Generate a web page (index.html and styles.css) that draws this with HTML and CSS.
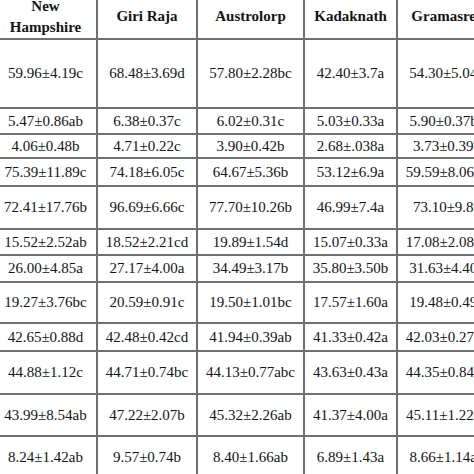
FILE: index.html
```
<!DOCTYPE html>
<html>
<head>
<meta charset="utf-8">
<link rel="stylesheet" href="styles.css">
</head>
<body>
<div class="frame">
<table class="data">
<colgroup>
<col class="c1"><col class="c2"><col class="c3"><col class="c4"><col class="c5">
</colgroup>
<thead>
<tr><th>New<br>Hampshire</th><th>Giri Raja</th><th>Austrolorp</th><th>Kadaknath</th><th>Gramasree</th></tr>
</thead>
<tbody>
<tr><td>59.96±4.19c</td><td>68.48±3.69d</td><td>57.80±2.28bc</td><td>42.40±3.7a</td><td>54.30±5.04b</td></tr>
<tr><td>5.47±0.86ab</td><td>6.38±0.37c</td><td>6.02±0.31c</td><td>5.03±0.33a</td><td>5.90±0.37bc</td></tr>
<tr><td>4.06±0.48b</td><td>4.71±0.22c</td><td>3.90±0.42b</td><td>2.68±.038a</td><td>3.73±0.39b</td></tr>
<tr><td>75.39±11.89c</td><td>74.18±6.05c</td><td>64.67±5.36b</td><td>53.12±6.9a</td><td>59.59±8.06ab</td></tr>
<tr><td>72.41±17.76b</td><td>96.69±6.66c</td><td>77.70±10.26b</td><td>46.99±7.4a</td><td>73.10±9.8b</td></tr>
<tr><td>15.52±2.52ab</td><td>18.52±2.21cd</td><td>19.89±1.54d</td><td>15.07±0.33a</td><td>17.08±2.08bc</td></tr>
<tr><td>26.00±4.85a</td><td>27.17±4.00a</td><td>34.49±3.17b</td><td>35.80±3.50b</td><td>31.63±4.40b</td></tr>
<tr><td>19.27±3.76bc</td><td>20.59±0.91c</td><td>19.50±1.01bc</td><td>17.57±1.60a</td><td>19.48±0.49b</td></tr>
<tr><td>42.65±0.88d</td><td>42.48±0.42cd</td><td>41.94±0.39ab</td><td>41.33±0.42a</td><td>42.03±0.27bc</td></tr>
<tr><td>44.88±1.12c</td><td>44.71±0.74bc</td><td>44.13±0.77abc</td><td>43.63±0.43a</td><td>44.35±0.84ab</td></tr>
<tr><td>43.99±8.54ab</td><td>47.22±2.07b</td><td>45.32±2.26ab</td><td>41.37±4.00a</td><td>45.11±1.22ab</td></tr>
<tr><td>8.24±1.42ab</td><td>9.57±0.74b</td><td>8.40±1.66ab</td><td>6.89±1.43a</td><td>8.66±1.14ab</td></tr>
</tbody>
</table>
</div>
</body>
</html>
```
FILE: styles.css
```
html, body {
  margin: 0;
  padding: 0;
  background: #ffffff;
  overflow: hidden;
}
.frame {
  margin: -7px 0 0 -7px;
}
.data {
  border-collapse: collapse;
  table-layout: fixed;
  width: 503px;
  font-family: "Liberation Serif", "Times New Roman", serif;
  font-size: 15px;
  color: #141414;
}
.c1 { width: 103px; }
.c2 { width: 100px; }
.c3 { width: 107px; }
.c4 { width: 93px; }
.c5 { width: 100px; }
.data th, .data td {
  border: 2px solid #707070;
  text-align: center;
  vertical-align: middle;
  padding: 0;
  white-space: nowrap;
  overflow: hidden;
}
.data th {
  font-weight: bold;
  line-height: 21px;
}
.data thead tr { height: 45px; }
.data tbody tr:nth-child(1) { height: 69px; }
.data tbody tr:nth-child(2) { height: 26px; }
.data tbody tr:nth-child(3) { height: 24px; }
.data tbody tr:nth-child(4) { height: 28px; }
.data tbody tr:nth-child(5) { height: 43px; }
.data tbody tr:nth-child(6) { height: 26px; }
.data tbody tr:nth-child(7) { height: 27px; }
.data tbody tr:nth-child(8) { height: 41px; }
.data tbody tr:nth-child(9) { height: 28px; }
.data tbody tr:nth-child(10) { height: 43px; }
.data tbody tr:nth-child(11) { height: 42px; }
.data tbody tr:nth-child(12) { height: 42px; }
```
